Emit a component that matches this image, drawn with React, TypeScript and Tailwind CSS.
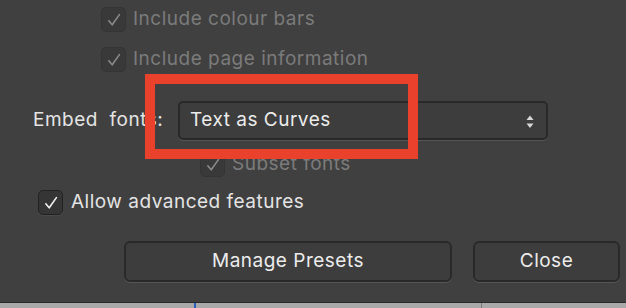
import React from "react";

function Check({ disabled }: { disabled?: boolean }) {
  return (
    <div
      className={
        "w-[25px] h-[25px] rounded-[5px] border flex items-center justify-center shrink-0 " +
        (disabled
          ? "bg-[#393939] border-[#343434]"
          : "bg-[#353535] border-[#222222] shadow-[0_1px_0_#4a4a4a]")
      }
    >
      <svg width="16" height="16" viewBox="0 0 16 16" fill="none">
        <path
          d="M2.8 8.8 L6.2 12.8 L13.4 2.6"
          stroke={disabled ? "#8a8a8a" : "#f2f2f2"}
          strokeWidth="1.6"
          strokeLinecap="round"
          strokeLinejoin="round"
        />
      </svg>
    </div>
  );
}

export default function App() {
  const t = "text-[19px] tracking-[0.5px]";
  return (
    <div
      className="relative w-[626px] h-[308px] bg-[#404040] overflow-hidden flex flex-col"
      style={{ fontFamily: "Inter, 'Noto Sans', sans-serif" }}
    >
      <div className="flex flex-col flex-1">
        <div className="flex items-center gap-[7px] pl-[101px] mt-[7px] h-[25px]">
          <Check disabled />
          <span className={t + " text-[#7b7b7b]"}>Include colour bars</span>
        </div>
        <div className="flex items-center gap-[7px] pl-[101px] mt-[15px] h-[25px]">
          <Check disabled />
          <span className={t + " text-[#7b7b7b]"}>Include page information</span>
        </div>
        <div className="flex items-center mt-[29px] h-[39px]">
          <span className={t + " pl-[33px] w-[178px] text-[#e4e4e4] whitespace-pre"}>
            {"Embed  fonts:"}
          </span>
          <div className="w-[370px] h-[39px] rounded-[5px] border-2 border-[#292929] bg-[#3d3d3d] shadow-[0_1px_0_#555555] flex items-center justify-between pl-[10px] pr-[12px]">
            <span className={t + " text-[#ececec]"}>Text as Curves</span>
            <svg width="8" height="16" viewBox="0 0 8 16">
              <path d="M4 2.5 L7.5 7 L0.5 7 Z" fill="#d8d8d8" />
              <path d="M4 15 L7.5 10.5 L0.5 10.5 Z" fill="#d8d8d8" />
            </svg>
          </div>
        </div>
        <div className="flex items-center gap-[7px] pl-[200px] mt-[12px] h-[25px]">
          <Check disabled />
          <span className={t + " text-[#7b7b7b]"}>Subset fonts</span>
        </div>
        <div className="flex items-center gap-[8px] pl-[38px] mt-[13px] h-[25px]">
          <Check />
          <span className={t + " text-[#e4e4e4]"}>Allow advanced features</span>
        </div>
        <div className="flex gap-[21px] pl-[124px] mt-[26px]">
          <button className={t + " w-[328px] h-[41px] rounded-[6px] border-2 border-[#292929] bg-[#3d3d3d] shadow-[0_1px_0_#555555] text-[#ececec]"}>
            Manage Presets
          </button>
          <button className={t + " w-[147px] h-[41px] rounded-[6px] border-2 border-[#292929] bg-[#3d3d3d] shadow-[0_1px_0_#555555] text-[#ececec]"}>
            Close
          </button>
        </div>
      </div>
      <div className="h-[6px] bg-[#a9a9a9] border-t border-[#2a2a2a] relative flex">
        <div className="ml-[194px] w-[2px] bg-[#2a5fbf]" />
        <div className="ml-[285px] w-[1px] bg-[#7a7a7a]" />
      </div>
      <div className="absolute left-[145px] top-[74px] w-[273px] h-[85px] border-[10px] border-[#e9412b]" />
    </div>
  );
}
